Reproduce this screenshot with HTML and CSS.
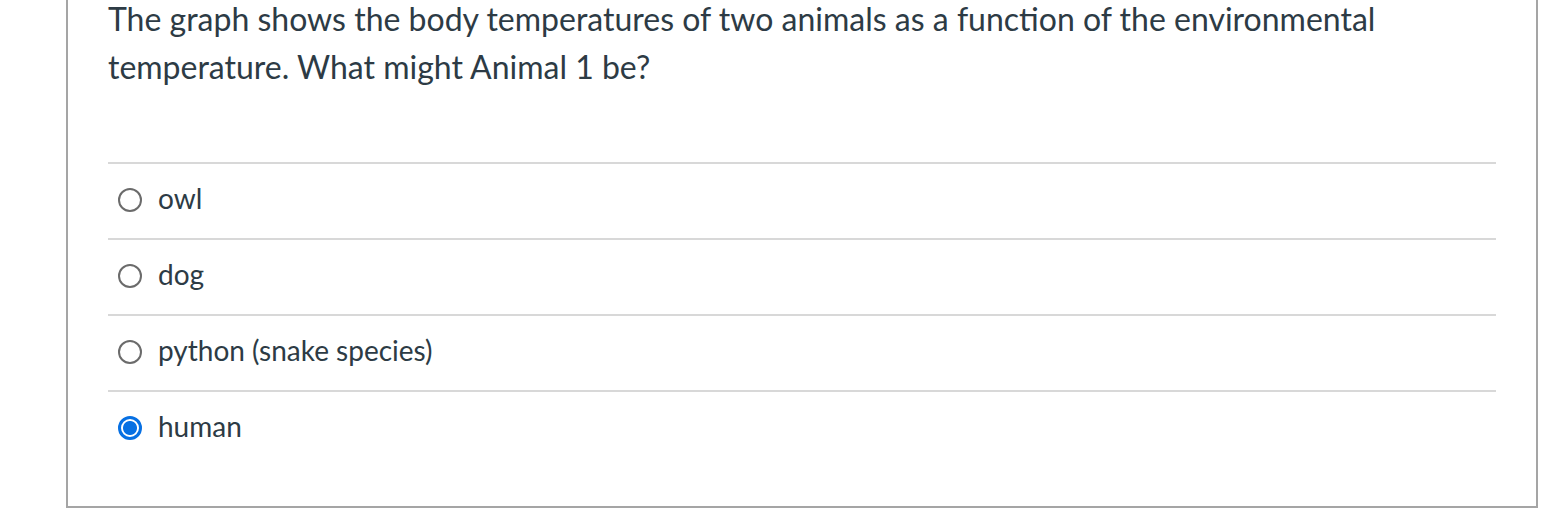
FILE: index.html
```html
<!DOCTYPE html>
<html>
<head>
<meta charset="utf-8">
<link rel="stylesheet" href="styles.css">
</head>
<body>
<div class="box">
  <div class="question">The graph shows the body temperatures of two animals as a function of the environmental temperature. What might Animal 1 be?</div>
  <div class="answers">
    <label class="answer">
      <span class="radio"></span>
      <span class="label">owl</span>
    </label>
    <label class="answer">
      <span class="radio"></span>
      <span class="label">dog</span>
    </label>
    <label class="answer">
      <span class="radio"></span>
      <span class="label">python (snake species)</span>
    </label>
    <label class="answer">
      <span class="radio checked"></span>
      <span class="label">human</span>
    </label>
  </div>
</div>
</body>
</html>
```
FILE: styles.css
```css
html, body {
  margin: 0;
  padding: 0;
  background: #ffffff;
}
body {
  font-family: Lato, "Noto Sans", sans-serif;
  color: #2d3b45;
}
.box {
  margin-left: 66px;
  border: 2px solid #a5a5a5;
  border-top: none;
  padding: 0 40px 40px 40px;
  box-sizing: content-box;
  width: 1388px;
}
.question {
  font-size: 32px;
  line-height: 48px;
  margin-top: -5px;
}
.answers {
  margin-top: 71px;
}
.answer {
  display: flex;
  align-items: center;
  height: 74px;
  border-top: 2px solid #d8d8d8;
}
.radio {
  width: 20px;
  height: 20px;
  border: 2px solid #6b6b6b;
  border-radius: 50%;
  margin-left: 10px;
  margin-right: 16px;
  box-sizing: content-box;
  flex: none;
  margin-bottom: 2px;
}
.radio.checked {
  border: 3px solid #0770e3;
  width: 18px;
  height: 18px;
  background: radial-gradient(circle, #0770e3 0 6.5px, #ffffff 7.5px);
}
.label {
  font-size: 28px;
  line-height: 32px;
  padding-bottom: 6px;
}
```
